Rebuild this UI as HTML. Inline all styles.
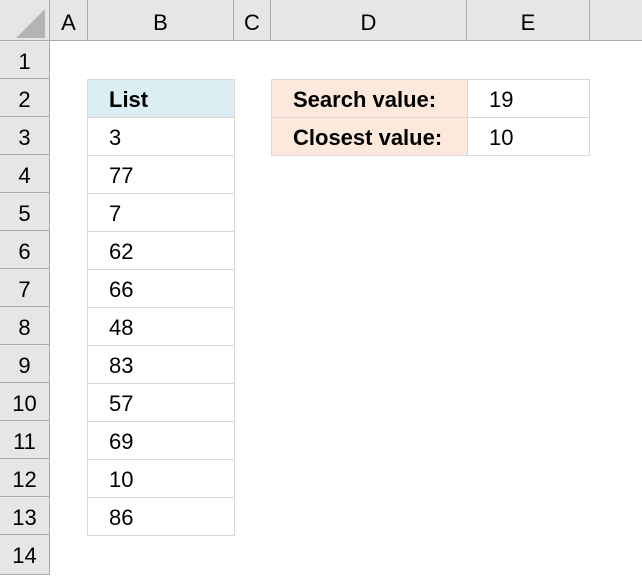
<!DOCTYPE html>
<html><head><meta charset="utf-8"><style>
*{margin:0;padding:0;box-sizing:border-box}
body{width:642px;height:570px;overflow:hidden;background:#fff;font-family:"Liberation Sans",sans-serif;position:relative}
.a{position:absolute}
.ch{position:absolute;top:0;height:41px;background:#e6e6e6;border-right:1px solid #ababab;border-bottom:1px solid #ababab;font-size:22px;text-align:center;line-height:46px;color:#000}
.rh{position:absolute;left:0;width:50px;height:38px;background:#e6e6e6;border-right:1px solid #ababab;border-bottom:1px solid #ababab;font-size:22px;text-align:center;line-height:42px}
.c{position:absolute;height:39px;border:1px solid #d9d9d9;font-size:22px;line-height:40px;padding-left:21px}
.b{font-weight:bold}
</style></head><body>
<div class="ch" style="left:0;width:50px"></div>
<svg class="a" style="left:16px;top:9px" width="30" height="30"><polygon points="29,0 29,29 0,29" fill="#b4b4b4"/></svg>
<div class="ch" style="left:50px;width:38px">A</div>
<div class="ch" style="left:88px;width:146px">B</div>
<div class="ch" style="left:234px;width:37px">C</div>
<div class="ch" style="left:271px;width:196px">D</div>
<div class="ch" style="left:467px;width:123px">E</div>
<div class="ch" style="left:590px;width:60px;border-right:none"></div>

<div class="rh" style="top:41px">1</div>
<div class="rh" style="top:79px">2</div>
<div class="rh" style="top:117px">3</div>
<div class="rh" style="top:155px">4</div>
<div class="rh" style="top:193px">5</div>
<div class="rh" style="top:231px">6</div>
<div class="rh" style="top:269px">7</div>
<div class="rh" style="top:307px">8</div>
<div class="rh" style="top:345px">9</div>
<div class="rh" style="top:383px">10</div>
<div class="rh" style="top:421px">11</div>
<div class="rh" style="top:459px">12</div>
<div class="rh" style="top:497px">13</div>
<div class="rh" style="top:535px;height:40px">14</div>

<div class="c b" style="left:87px;top:79px;width:148px;background:#daeef3">List</div>
<div class="c" style="left:87px;top:117px;width:148px">3</div>
<div class="c" style="left:87px;top:155px;width:148px">77</div>
<div class="c" style="left:87px;top:193px;width:148px">7</div>
<div class="c" style="left:87px;top:231px;width:148px">62</div>
<div class="c" style="left:87px;top:269px;width:148px">66</div>
<div class="c" style="left:87px;top:307px;width:148px">48</div>
<div class="c" style="left:87px;top:345px;width:148px">83</div>
<div class="c" style="left:87px;top:383px;width:148px">57</div>
<div class="c" style="left:87px;top:421px;width:148px">69</div>
<div class="c" style="left:87px;top:459px;width:148px">10</div>
<div class="c" style="left:87px;top:497px;width:148px">86</div>

<div class="c b" style="left:271px;top:79px;width:197px;background:#fce9db">Search value:</div>
<div class="c b" style="left:271px;top:117px;width:197px;background:#fce9db">Closest value:</div>
<div class="c" style="left:467px;top:79px;width:123px">19</div>
<div class="c" style="left:467px;top:117px;width:123px">10</div>
</body></html>
